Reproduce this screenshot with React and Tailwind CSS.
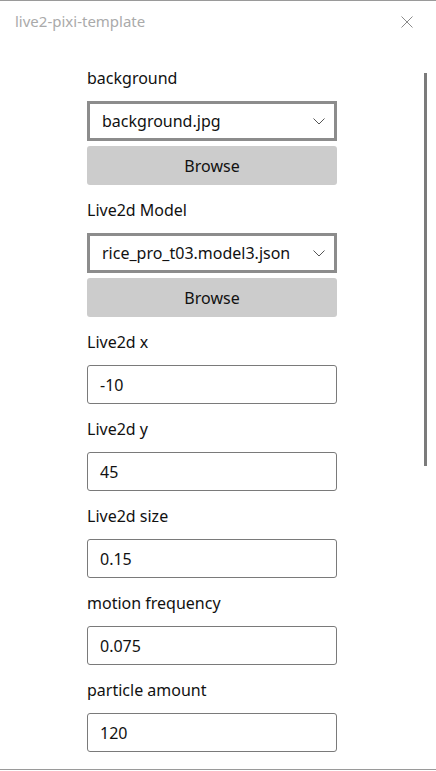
import React from 'react';

// --- Icons ---
const CloseIcon = () => (
  <svg width="12" height="12" viewBox="0 0 12 12" fill="none" stroke="#8a8a8a" strokeWidth="1"><path d="M0.5 0.5l11 11M11.5 0.5l-11 11" /></svg>
);
const Chevron = () => (
  <svg width="12" height="7" viewBox="0 0 12 7" fill="none" stroke="#555" strokeWidth="1"><polyline points="0.5,0.5 6,6 11.5,0.5" /></svg>
);

const Label = ({ children, first }) => (
  <div className={`h-[24px] leading-[24px] mb-[11px] text-[16px] text-[#111] ${first ? '' : 'mt-[13px]'}`}>
    {children}
  </div>
);

const FileField = ({ label, value, first }) => (
  <div>
    <Label first={first}>{label}</Label>
    <div className="h-[40px] border-[3px] border-[#8c8c8c] flex items-center justify-between pl-[12px] pr-[9px] bg-white">
      <span className="text-[16px] text-[#111] whitespace-nowrap">{value}</span>
      <Chevron />
    </div>
    <button className="mt-[5px] w-full h-[39px] bg-[#cccccc] rounded-[3px] text-[16px] text-[#111]">
      Browse
    </button>
  </div>
);

const TextField = ({ label, value }) => (
  <div>
    <Label>{label}</Label>
    <div className="h-[39px] border border-[#7a7a7a] rounded-[3px] flex items-center px-[12px] text-[16px] text-[#111]">
      {value}
    </div>
  </div>
);

export default function App() {
  const fields = [
    { label: 'Live2d x', value: '-10' },
    { label: 'Live2d y', value: '45' },
    { label: 'Live2d size', value: '0.15' },
    { label: 'motion frequency', value: '0.075' },
    { label: 'particle amount', value: '120' },
  ];

  return (
    <div
      className="relative w-[436px] h-[770px] bg-white border-t border-b border-[#9a9a9a] overflow-hidden"
      style={{ fontFamily: '"Segoe UI", "Noto Sans", "Open Sans", sans-serif' }}
    >
      {/* Title bar */}
      <div className="h-[41px] flex items-center justify-between pl-[15px] pr-[23px]">
        <span className="text-[15px] text-[#aaaaaa]">live2-pixi-template</span>
        <CloseIcon />
      </div>

      {/* Form */}
      <div className="ml-[87px] w-[250px] mt-[24px]">
        <FileField first label="background" value="background.jpg" />
        <FileField label="Live2d Model" value="rice_pro_t03.model3.json" />
        {fields.map((f) => (
          <TextField key={f.label} label={f.label} value={f.value} />
        ))}
      </div>

      {/* Scrollbar thumb */}
      <div className="absolute left-[424px] top-[72px] w-[3px] h-[393px] bg-[#7b7b7b]" />
    </div>
  );
}
